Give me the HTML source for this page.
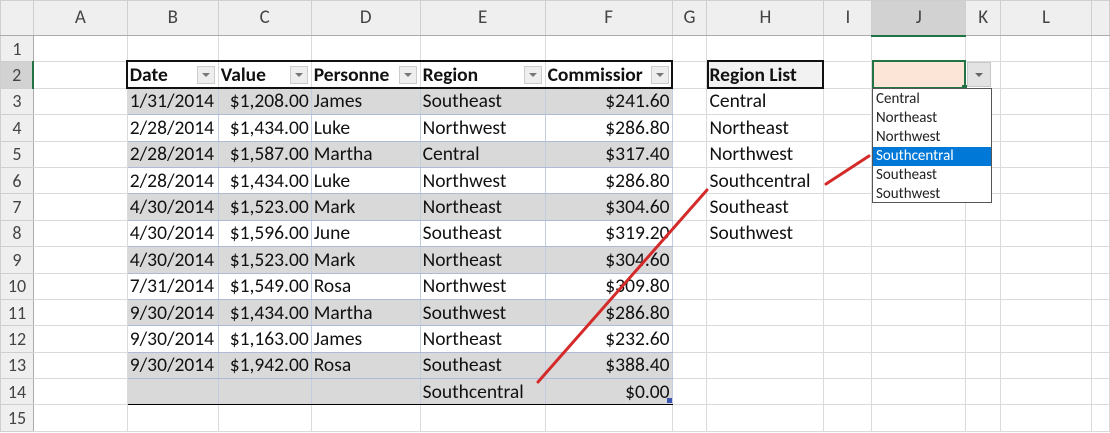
<!DOCTYPE html>
<html><head><meta charset="utf-8"><style>
body{margin:0;width:1110px;height:433px;overflow:hidden;background:#fff;font-family:Carlito,Calibri,"Liberation Sans",sans-serif;}
table{border-collapse:collapse;table-layout:fixed;position:absolute;left:0;top:0;}
td{border:1px solid #dadada;padding:0 2px;height:26.4px;font-size:19.5px;color:#111;white-space:nowrap;overflow:hidden;box-sizing:border-box;line-height:20px}
tr.h td{height:35px;background:#efefef;color:#444;text-align:center;font-size:19px;border-color:#cfcfcf;border-bottom:1px solid #ababab;}
td.rh{background:#efefef;color:#444;text-align:center;padding:0;border-color:#cfcfcf;border-right:1px solid #ababab;font-size:18px}
td.g{background:#d9d9d9;}
td.t{border-left-color:#c4cde0;border-right-color:#c4cde0;border-bottom:1px solid #aebad6;border-top:1px solid #aebad6}
td.r{text-align:right}
td.b{font-weight:bold;position:relative}
.dd{position:absolute;right:3px;top:4px;width:18px;height:18px;background:#eee;border:1px solid #ccc;box-sizing:border-box}
.dd:after{content:"";position:absolute;left:4px;top:6px;border-left:4px solid transparent;border-right:4px solid transparent;border-top:4px solid #777}
.abs{position:absolute}
.li{height:19px;line-height:19px;font-size:15px;padding-left:3px;color:#222}
</style></head><body>
<table>
<colgroup><col style="width:33px"><col style="width:94px"><col style="width:91px"><col style="width:93px"><col style="width:109px"><col style="width:125px"><col style="width:127px"><col style="width:35px"><col style="width:117px"><col style="width:48px"><col style="width:94px"><col style="width:35px"><col style="width:91px"><col style="width:18px"></colgroup>
<tr class="h"><td style="background:#efefef"></td><td>A</td><td>B</td><td>C</td><td>D</td><td>E</td><td>F</td><td>G</td><td>H</td><td>I</td><td style="background:#d2d2d2;border-bottom:2px solid #217346">J</td><td>K</td><td>L</td><td></td></tr>
<tr><td class="rh">1</td><td></td><td></td><td></td><td></td><td></td><td></td><td></td><td></td><td></td><td></td><td></td><td></td><td></td></tr>
<tr><td class="rh" style="background:#d2d2d2;border-right:2px solid #217346">2</td><td></td><td class="b">Date<span class="dd"></span></td><td class="b">Value<span class="dd"></span></td><td class="b">Personne<span class="dd"></span></td><td class="b">Region<span class="dd"></span></td><td class="b">Commissior<span class="dd"></span></td><td></td><td class="b" style="background:#f2f2f2">Region List</td><td></td><td style="background:#fce4d6"></td><td></td><td></td><td></td></tr>
<tr><td class="rh">3</td><td></td><td class="t g">1/31/2014</td><td class="t g r">$1,208.00</td><td class="t g">James</td><td class="t g">Southeast</td><td class="t g r">$241.60</td><td></td><td>Central</td><td></td><td></td><td></td><td></td><td></td></tr>
<tr><td class="rh">4</td><td></td><td class="t">2/28/2014</td><td class="t r">$1,434.00</td><td class="t">Luke</td><td class="t">Northwest</td><td class="t r">$286.80</td><td></td><td>Northeast</td><td></td><td></td><td></td><td></td><td></td></tr>
<tr><td class="rh">5</td><td></td><td class="t g">2/28/2014</td><td class="t g r">$1,587.00</td><td class="t g">Martha</td><td class="t g">Central</td><td class="t g r">$317.40</td><td></td><td>Northwest</td><td></td><td></td><td></td><td></td><td></td></tr>
<tr><td class="rh">6</td><td></td><td class="t">2/28/2014</td><td class="t r">$1,434.00</td><td class="t">Luke</td><td class="t">Northwest</td><td class="t r">$286.80</td><td></td><td>Southcentral</td><td></td><td></td><td></td><td></td><td></td></tr>
<tr><td class="rh">7</td><td></td><td class="t g">4/30/2014</td><td class="t g r">$1,523.00</td><td class="t g">Mark</td><td class="t g">Northeast</td><td class="t g r">$304.60</td><td></td><td>Southeast</td><td></td><td></td><td></td><td></td><td></td></tr>
<tr><td class="rh">8</td><td></td><td class="t">4/30/2014</td><td class="t r">$1,596.00</td><td class="t">June</td><td class="t">Southeast</td><td class="t r">$319.20</td><td></td><td>Southwest</td><td></td><td></td><td></td><td></td><td></td></tr>
<tr><td class="rh">9</td><td></td><td class="t g">4/30/2014</td><td class="t g r">$1,523.00</td><td class="t g">Mark</td><td class="t g">Northeast</td><td class="t g r">$304.60</td><td></td><td></td><td></td><td></td><td></td><td></td><td></td></tr>
<tr><td class="rh">10</td><td></td><td class="t">7/31/2014</td><td class="t r">$1,549.00</td><td class="t">Rosa</td><td class="t">Northwest</td><td class="t r">$309.80</td><td></td><td></td><td></td><td></td><td></td><td></td><td></td></tr>
<tr><td class="rh">11</td><td></td><td class="t g">9/30/2014</td><td class="t g r">$1,434.00</td><td class="t g">Martha</td><td class="t g">Southwest</td><td class="t g r">$286.80</td><td></td><td></td><td></td><td></td><td></td><td></td><td></td></tr>
<tr><td class="rh">12</td><td></td><td class="t">9/30/2014</td><td class="t r">$1,163.00</td><td class="t">James</td><td class="t">Northeast</td><td class="t r">$232.60</td><td></td><td></td><td></td><td></td><td></td><td></td><td></td></tr>
<tr><td class="rh">13</td><td></td><td class="t g">9/30/2014</td><td class="t g r">$1,942.00</td><td class="t g">Rosa</td><td class="t g">Southeast</td><td class="t g r">$388.40</td><td></td><td></td><td></td><td></td><td></td><td></td><td></td></tr>
<tr><td class="rh">14</td><td></td><td class="t g" style="border-bottom:1px solid #000"></td><td class="t g" style="border-bottom:1px solid #000"></td><td class="t g" style="border-bottom:1px solid #000"></td><td class="t g" style="border-bottom:1px solid #000">Southcentral</td><td class="t g r" style="border-bottom:1px solid #000">$0.00</td><td></td><td></td><td></td><td></td><td></td><td></td><td></td></tr>
<tr><td class="rh">15</td><td></td><td></td><td></td><td></td><td></td><td></td><td></td><td></td><td></td><td></td><td></td><td></td><td></td></tr>
</table>
<div class="abs" style="left:126px;top:60px;width:547px;height:29px;border:2px solid #111;box-sizing:border-box"></div>
<div class="abs" style="left:707px;top:60px;width:117px;height:29px;border:2px solid #111;box-sizing:border-box"></div>
<div class="abs" style="left:872px;top:60px;width:94px;height:29px;border:2px solid #217346;box-sizing:border-box"></div>
<div class="abs" style="left:962px;top:85px;width:5px;height:5px;background:#217346"></div>
<div class="abs" style="left:967px;top:62px;width:24px;height:25px;background:#e3e3e3;border:1px solid #c8c8c8;box-sizing:border-box"><div style="position:absolute;left:7px;top:10px;border-left:4px solid transparent;border-right:4px solid transparent;border-top:4px solid #666"></div></div>
<div class="abs" style="left:667px;top:398px;width:5px;height:5px;background:#3a56b0"></div>
<div class="abs" style="left:872px;top:88px;width:120px;height:115px;background:#fff;border:1px solid #555;box-sizing:border-box;padding-top:1px">
<div class="li">Central</div><div class="li">Northeast</div><div class="li">Northwest</div><div class="li" style="background:#0078d7;color:#fff">Southcentral</div><div class="li">Southeast</div><div class="li">Southwest</div>
</div>
<svg class="abs" style="left:0;top:0" width="1110" height="433"><g stroke="#d42a2a" stroke-width="3" stroke-linecap="round"><line x1="538" y1="382" x2="707" y2="190"/><line x1="826" y1="184" x2="869" y2="156"/></g></svg>
</body></html>
